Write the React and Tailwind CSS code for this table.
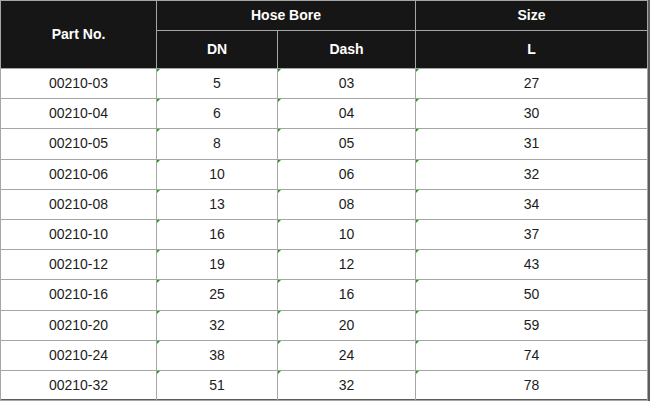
const rows = [
  ['00210-03', '5', '03', '27'],
  ['00210-04', '6', '04', '30'],
  ['00210-05', '8', '05', '31'],
  ['00210-06', '10', '06', '32'],
  ['00210-08', '13', '08', '34'],
  ['00210-10', '16', '10', '37'],
  ['00210-12', '19', '12', '43'],
  ['00210-16', '25', '16', '50'],
  ['00210-20', '32', '20', '59'],
  ['00210-24', '38', '24', '74'],
  ['00210-32', '51', '32', '78'],
];

// little green "number stored as text" corner marks, like the spreadsheet
function Cell({ children, mark }) {
  return (
    <td className="relative border border-[#a6a6a6] text-center align-middle p-0">
      {mark && (
        <span className="absolute left-0 top-0 w-0 h-0 border-t-[3px] border-r-[3px] border-t-[#1e9e1e] border-r-transparent" />
      )}
      {children}
    </td>
  );
}

export default function App() {
  return (
    <div className="w-[650px] h-[401px] bg-white overflow-hidden" style={{ fontFamily: '"Liberation Sans", Arial, sans-serif' }}>
      <div className="w-[650px] h-[401px] border-r-2 border-b-2 border-[#5c5c5c]">
        <table className="w-[648px] border-collapse table-fixed text-[14px] text-[#1c1c1c]">
          <colgroup>
            <col className="w-[156px]" />
            <col className="w-[121px]" />
            <col className="w-[138px]" />
            <col />
          </colgroup>
          <thead className="bg-[#161616] text-white font-bold">
            <tr className="h-[30px]">
              <th rowSpan={2} className="border border-[#a6a6a6] font-bold">Part No.</th>
              <th colSpan={2} className="border border-[#a6a6a6] font-bold">Hose Bore</th>
              <th className="border border-[#a6a6a6] font-bold">Size</th>
            </tr>
            <tr className="h-[38px]">
              <th className="border border-[#a6a6a6] font-bold">DN</th>
              <th className="border border-[#a6a6a6] font-bold">Dash</th>
              <th className="border border-[#a6a6a6] font-bold">L</th>
            </tr>
          </thead>
          <tbody>
            {rows.map(r => (
              <tr key={r[0]} className="h-[30.2px]">
                <Cell>{r[0]}</Cell>
                <Cell mark>{r[1]}</Cell>
                <Cell mark>{r[2]}</Cell>
                <Cell mark>{r[3]}</Cell>
              </tr>
            ))}
          </tbody>
        </table>
      </div>
    </div>
  );
}
